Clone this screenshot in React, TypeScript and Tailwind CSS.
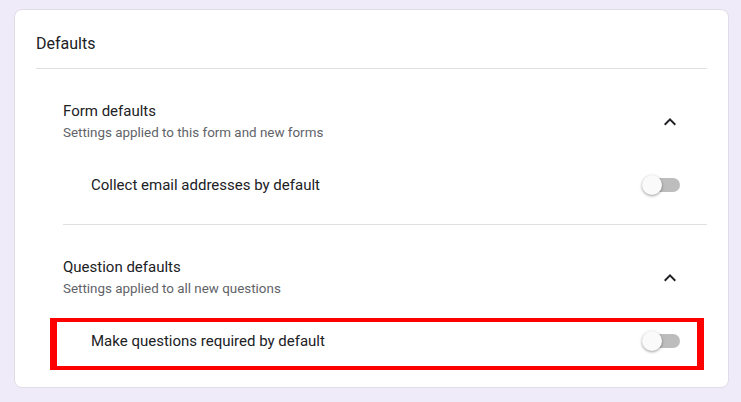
const SECTIONS = [
  {
    title: 'Form defaults',
    subtitle: 'Settings applied to this form and new forms',
    option: 'Collect email addresses by default',
    highlighted: false,
  },
  {
    title: 'Question defaults',
    subtitle: 'Settings applied to all new questions',
    option: 'Make questions required by default',
    highlighted: true,
  },
];

const ChevronUp = () => (
  <svg viewBox="0 0 24 24" className="size-6 fill-[#202124]">
    <path d="M12 8l-6 6 1.41 1.41L12 10.83l4.59 4.58L18 14z" />
  </svg>
);

const Toggle = () => (
  <div className="relative flex h-5 w-[38px] items-center">
    <div className="ml-auto h-[14px] w-[34px] rounded-full bg-[#bdbdbd]" />
    <div className="absolute left-0 top-0 size-5 rounded-full bg-[#fafafa] shadow-[0_1px_3px_rgba(0,0,0,0.4)]" />
  </div>
);

const App = () => {
  return (
    <div className="min-h-[402px] bg-[#f0ebf8] px-[14px] pt-[9px] font-['Roboto',sans-serif]">
      <div className="w-[715px] rounded-lg border border-[#e0dde6] bg-white px-[21px] pb-[22px] pt-[22px]">
        <h2 className="border-b border-[#e0e0e0] pb-[12px] text-base leading-6 text-[#202124]">Defaults</h2>

        <div className="pl-[27px]">
          {SECTIONS.map((s, i) => (
            <div key={s.title} className={i > 0 ? 'border-t border-[#e0e0e0] pt-[32px]' : 'pt-[32px]'}>
              <div className="flex items-center pr-[25px]">
                <div className="flex-1">
                  <p className="text-[15px] leading-5 text-[#202124]">{s.title}</p>
                  <p className="mt-[3px] text-[13.4px] leading-[18px] text-[#5f6368]">{s.subtitle}</p>
                </div>
                <ChevronUp />
              </div>

              <div className={i === 0 ? 'relative mb-[15px] mt-[19px]' : 'relative mt-[19px]'}>
                <div className="flex h-12 items-center pl-[28px] pr-[27px]">
                  <span className="flex-1 text-[15px] text-[#202124]">{s.option}</span>
                  <Toggle />
                </div>
                {s.highlighted && (
                  <div className="pointer-events-none absolute -bottom-[5px] -left-[13px] right-[3px] top-[1px] border-x-[7px] border-y-4 border-[#ff0000]" />
                )}
              </div>
            </div>
          ))}
        </div>
      </div>
    </div>
  );
};

export default App;
